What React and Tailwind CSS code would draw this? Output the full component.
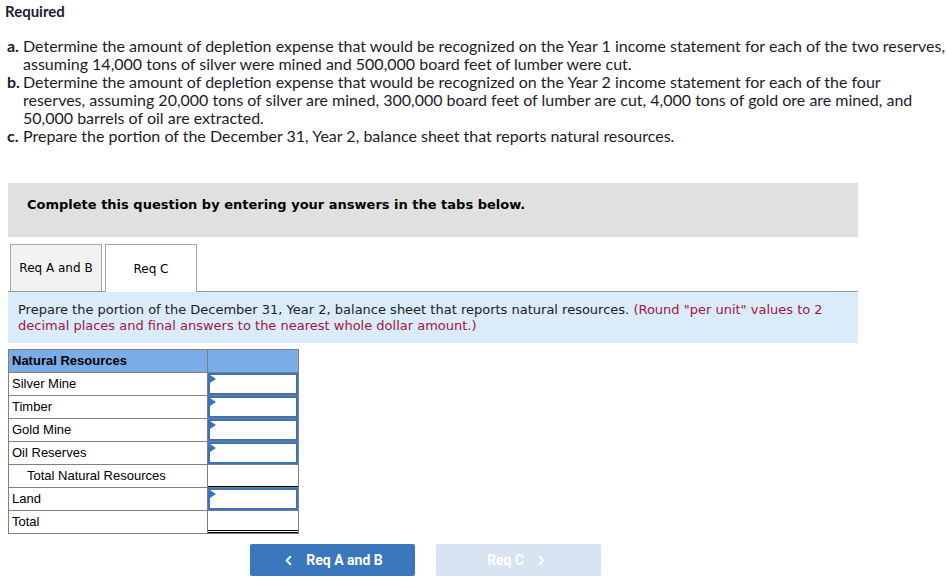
import { ChevronLeft, ChevronRight } from 'lucide-react';

const rows = [
  { label: 'Silver Mine', input: true },
  { label: 'Timber', input: true },
  { label: 'Gold Mine', input: true },
  { label: 'Oil Reserves', input: true },
  { label: 'Total Natural Resources', indent: true, total: 'single' },
  { label: 'Land', input: true },
  { label: 'Total', total: 'double' },
];

function InputCell() {
  return (
    <div className="relative h-full border-2 border-[#3b73b9] bg-white">
      <span className="absolute left-0 top-0 w-0 h-0 border-y-[4px] border-y-transparent border-l-[6px] border-l-[#3b73b9]" />
    </div>
  );
}

export default function App() {
  return (
    <div className="w-[947px] h-[584px] bg-white overflow-hidden text-[#1c1c2c]" style={{ fontFamily: 'Lato, "Open Sans", sans-serif' }}>
      {/* Question */}
      <div className="pl-[5px] pt-[2px]">
        <h3 className="text-[15px] font-bold leading-[18px]">Required</h3>
      </div>
      <ol className="mt-[17px] pl-[7px] text-[16px] leading-[18px]">
        <li className="flex">
          <span className="font-bold w-[16px] shrink-0">a.</span>
          <span>
            Determine the amount of depletion expense that would be recognized on the Year 1 income statement for each of the two reserves,
            <br />
            assuming 14,000 tons of silver were mined and 500,000 board feet of lumber were cut.
          </span>
        </li>
        <li className="flex">
          <span className="font-bold w-[16px] shrink-0">b.</span>
          <span>
            Determine the amount of depletion expense that would be recognized on the Year 2 income statement for each of the four
            <br />
            reserves, assuming 20,000 tons of silver are mined, 300,000 board feet of lumber are cut, 4,000 tons of gold ore are mined, and
            <br />
            50,000 barrels of oil are extracted.
          </span>
        </li>
        <li className="flex">
          <span className="font-bold w-[16px] shrink-0">c.</span>
          <span>Prepare the portion of the December 31, Year 2, balance sheet that reports natural resources.</span>
        </li>
      </ol>

      <div className="ml-[8px] w-[850px]" style={{ fontFamily: '"DejaVu Sans", Verdana, sans-serif' }}>
        {/* Instruction banner */}
        <div className="mt-[38px] h-[54px] bg-[#e0e0e0] pl-[19px] pt-[12px]">
          <p className="text-[13px] font-bold text-black">Complete this question by entering your answers in the tabs below.</p>
        </div>

        {/* Tabs */}
        <div className="mt-[7px] flex items-end gap-[3px] pl-[2px] border-b border-[#9a9a9a] h-[48px]">
          <div className="w-[92px] h-[47px] bg-[#f2f2f2] border border-b-0 border-[#a6a6a6] flex items-center justify-center text-[12px] text-black">Req A and B</div>
          <div className="w-[92px] h-[48px] -mb-px bg-white border border-b-0 border-[#a6a6a6] flex items-center justify-center text-[12px] text-black">Req C</div>
        </div>

        <div className="h-[51px] bg-[#daebf9] pl-[10px] pt-[10px] text-[13px] leading-[16px] text-[#222]">
          Prepare the portion of the December 31, Year 2, balance sheet that reports natural resources.{' '}
          <span className="text-[#a0183a]">(Round "per unit" values to 2 decimal places and final answers to the nearest whole dollar amount.)</span>
        </div>

        {/* Table */}
        <table className="mt-[6px] w-[290px] border-collapse text-[13px] text-black table-fixed" style={{ fontFamily: '"Liberation Sans", Arial, sans-serif' }}>
          <colgroup>
            <col className="w-[199px]" />
            <col className="w-[91px]" />
          </colgroup>
          <thead>
            <tr className="h-[23px] bg-[#7aade6]">
              <th className="border border-[#808080] text-left font-bold pl-[3px]">Natural Resources</th>
              <th className="border border-[#808080]"></th>
            </tr>
          </thead>
          <tbody>
            {rows.map((r) => (
              <tr key={r.label} className="h-[23px]">
                <td className={`border border-[#808080] ${r.indent ? 'pl-[18px]' : 'pl-[3px]'}`}>{r.label}</td>
                <td className="border border-[#808080] p-0 h-[23px]">
                  {r.input && <InputCell />}
                  {r.total === 'single' && <div className="h-full border-b border-black" />}
                  {r.total === 'double' && <div className="h-full border-b-[3px] border-double border-black" />}
                </td>
              </tr>
            ))}
          </tbody>
        </table>
      </div>

      {/* Navigation */}
      <div className="mt-[10px] flex justify-center gap-[21px] pr-[97px]" style={{ fontFamily: 'Roboto, sans-serif' }}>
        <button className="w-[165px] h-[32px] rounded-[2px] bg-[#3a77bc] text-white text-[14px] font-bold flex items-center justify-center gap-[10px]">
          <ChevronLeft className="w-[15px] h-[15px]" strokeWidth={3} />
          Req A and B
        </button>
        <button className="w-[165px] h-[32px] rounded-[2px] bg-[#d8e4f2] text-white text-[14px] font-bold flex items-center justify-center gap-[10px]">
          Req C
          <ChevronRight className="w-[15px] h-[15px]" strokeWidth={3} />
        </button>
      </div>
    </div>
  );
}
